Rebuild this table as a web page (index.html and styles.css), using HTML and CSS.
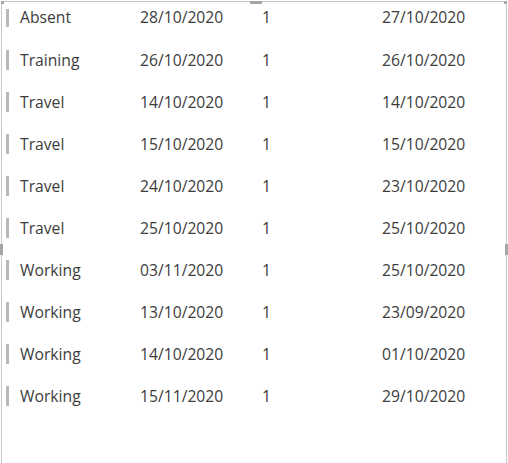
FILE: index.html
```html
<!DOCTYPE html>
<html>
<head>
<meta charset="utf-8">
<link rel="stylesheet" href="styles.css">
</head>
<body>
<div class="frame">
  <span class="handle h-tl"></span>
  <span class="handle h-tm"></span>
  <span class="handle h-tr"></span>
  <span class="handle h-ml"></span>
  <span class="handle h-mr"></span>
  <div class="list">
    <div class="row first"><span class="bar"></span><span class="c1">Absent</span><span class="c2">28/10/2020</span><span class="c3">1</span><span class="c4">27/10/2020</span></div>
    <div class="row"><span class="bar"></span><span class="c1">Training</span><span class="c2">26/10/2020</span><span class="c3">1</span><span class="c4">26/10/2020</span></div>
    <div class="row"><span class="bar"></span><span class="c1">Travel</span><span class="c2">14/10/2020</span><span class="c3">1</span><span class="c4">14/10/2020</span></div>
    <div class="row"><span class="bar"></span><span class="c1">Travel</span><span class="c2">15/10/2020</span><span class="c3">1</span><span class="c4">15/10/2020</span></div>
    <div class="row"><span class="bar"></span><span class="c1">Travel</span><span class="c2">24/10/2020</span><span class="c3">1</span><span class="c4">23/10/2020</span></div>
    <div class="row"><span class="bar"></span><span class="c1">Travel</span><span class="c2">25/10/2020</span><span class="c3">1</span><span class="c4">25/10/2020</span></div>
    <div class="row"><span class="bar"></span><span class="c1">Working</span><span class="c2">03/11/2020</span><span class="c3">1</span><span class="c4">25/10/2020</span></div>
    <div class="row"><span class="bar"></span><span class="c1">Working</span><span class="c2">13/10/2020</span><span class="c3">1</span><span class="c4">23/09/2020</span></div>
    <div class="row"><span class="bar"></span><span class="c1">Working</span><span class="c2">14/10/2020</span><span class="c3">1</span><span class="c4">01/10/2020</span></div>
    <div class="row"><span class="bar"></span><span class="c1">Working</span><span class="c2">15/11/2020</span><span class="c3">1</span><span class="c4">29/10/2020</span></div>
  </div>
</div>
</body>
</html>
```

FILE: styles.css
```css
html, body {
  margin: 0;
  padding: 0;
  background: #ffffff;
}
body {
  font-family: "Open Sans", "Noto Sans", sans-serif;
  font-size: 15.7px;
  color: #3c3c3c;
}
.frame {
  position: relative;
  box-sizing: border-box;
  margin: 1px 0 0 1px;
  width: 506px;
  height: 462px;
  border-top: 1px solid #c6c6c6;
  border-left: 1px solid #c6c6c6;
  border-right: 1px solid #c6c6c6;
}
.handle {
  position: absolute;
  background: #a6a6a6;
}
.h-tl { left: -1px; top: -1px; width: 3px; height: 3px; }
.h-tm { left: 248px; top: -1px; width: 12px; height: 3px; }
.h-tr { right: -1px; top: -1px; width: 3px; height: 3px; }
.h-ml { left: -2px; top: 242px; width: 3px; height: 11px; }
.h-mr { right: -2px; top: 242px; width: 3px; height: 11px; }
.list {
  display: flex;
  flex-direction: column;
}
.row {
  display: flex;
  align-items: center;
  height: 42px;
  white-space: nowrap;
}
.row.first {
  height: 37px;
  align-items: flex-start;
}
.bar {
  width: 3px;
  height: 20px;
  background: #b9b9b9;
  margin-left: 4px;
  margin-right: 11px;
  flex: none;
}
.row.first .bar {
  height: 18px;
  margin-top: 7px;
}
.row.first .c1,
.row.first .c2,
.row.first .c3,
.row.first .c4 {
  line-height: 21px;
  margin-top: 5px;
}
.c1 { width: 120px; }
.c2 { width: 122px; }
.c3 { width: 120px; }
.c4 { flex: 1; }
```
